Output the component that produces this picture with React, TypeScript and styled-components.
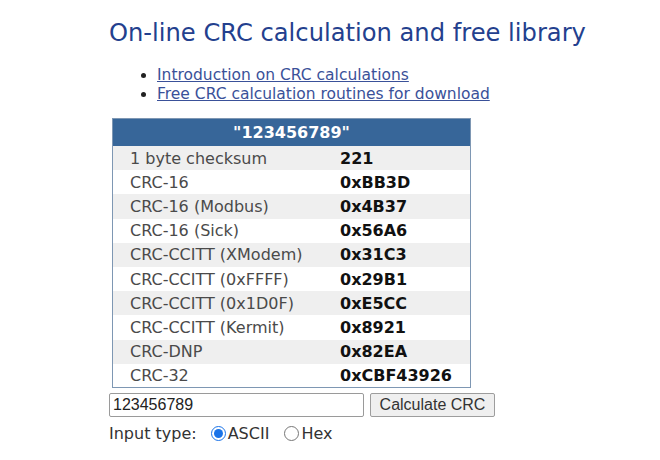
import React from "react";
import styled, { createGlobalStyle } from "styled-components";

const Global = createGlobalStyle`
  html, body { margin: 0; padding: 0; background: #fff; }
  body { font-family: "DejaVu Sans", Verdana, sans-serif; }
`;

const Page = styled.div`
  width: 660px;
  height: 460px;
  padding: 17px 0 0 109px;
  box-sizing: border-box;
  display: flex;
  flex-direction: column;
`;

const Title = styled.h1`
  margin: 0;
  font-size: 24.2px;
  font-weight: normal;
  color: #23408e;
  line-height: 32px;
`;

const LinkList = styled.ul`
  margin: 17px 0 0 0;
  padding: 0 0 0 48px;
  list-style: disc;
  font-size: 15.5px;
  line-height: 19px;
  color: #222;
`;

const Link = styled.a`
  color: #3a5199;
  text-decoration: underline;
`;

const Table = styled.table`
  margin: 14px 0 0 3px;
  width: 359px;
  border-collapse: collapse;
  border: 1px solid #7e97b3;
  font-size: 16px;
`;

const HeadCell = styled.th`
  background: #376699;
  color: #fff;
  font-weight: bold;
  height: 27px;
  padding: 0;
  text-align: center;
`;

const Row = styled.tr<{ $shade: boolean }>`
  background: ${(p) => (p.$shade ? "#efefef" : "#fff")};
  height: 24.2px;
`;

const NameCell = styled.td`
  padding: 0 0 0 17px;
  color: #4a4a4a;
  width: 210px;
`;

const ValueCell = styled.td`
  padding: 0;
  color: #111;
  font-weight: bold;
`;

const Form = styled.div`
  display: flex;
  align-items: center;
  gap: 6px;
  margin-top: 5px;
`;

const TextInput = styled.input`
  width: 255px;
  height: 24px;
  box-sizing: border-box;
  border: 1px solid #9a9a9a;
  border-radius: 2px;
  padding: 0 3px;
  font-family: "Liberation Sans", Arial, sans-serif;
  font-size: 16px;
  color: #222;
`;

const Button = styled.button`
  height: 24px;
  width: 125px;
  box-sizing: border-box;
  border: 1px solid #9d9d9d;
  border-radius: 2px;
  background: #efefef;
  font-family: "Liberation Sans", Arial, sans-serif;
  font-size: 16px;
  color: #333;
  padding: 0;
`;

const TypeRow = styled.div`
  display: flex;
  align-items: center;
  margin-top: 7px;
  font-size: 16px;
  color: #333;
`;

const Label = styled.span`
  margin-right: 14px;
`;

const RadioLabel = styled.label`
  display: flex;
  align-items: center;
  margin-right: 15px;
`;

const Radio = styled.input`
  margin: 0 2px 0 0;
  width: 15px;
  height: 15px;
  accent-color: #1a73e8;
`;

const rows: [string, string][] = [
  ["1 byte checksum", "221"],
  ["CRC-16", "0xBB3D"],
  ["CRC-16 (Modbus)", "0x4B37"],
  ["CRC-16 (Sick)", "0x56A6"],
  ["CRC-CCITT (XModem)", "0x31C3"],
  ["CRC-CCITT (0xFFFF)", "0x29B1"],
  ["CRC-CCITT (0x1D0F)", "0xE5CC"],
  ["CRC-CCITT (Kermit)", "0x8921"],
  ["CRC-DNP", "0x82EA"],
  ["CRC-32", "0xCBF43926"],
];

export default function App() {
  return (
    <>
      <Global />
      <Page>
        <Title>On-line CRC calculation and free library</Title>
        <LinkList>
          <li><Link href="#">Introduction on CRC calculations</Link></li>
          <li><Link href="#">Free CRC calculation routines for download</Link></li>
        </LinkList>
        <Table>
          <thead>
            <tr>
              <HeadCell colSpan={2}>"123456789"</HeadCell>
            </tr>
          </thead>
          <tbody>
            {rows.map(([n, v], i) => (
              <Row key={n} $shade={i % 2 === 0}>
                <NameCell>{n}</NameCell>
                <ValueCell>{v}</ValueCell>
              </Row>
            ))}
          </tbody>
        </Table>
        <Form>
          <TextInput defaultValue="123456789" />
          <Button>Calculate CRC</Button>
        </Form>
        <TypeRow>
          <Label>Input type:</Label>
          <RadioLabel><Radio type="radio" name="t" defaultChecked />ASCII</RadioLabel>
          <RadioLabel><Radio type="radio" name="t" />Hex</RadioLabel>
        </TypeRow>
      </Page>
    </>
  );
}
